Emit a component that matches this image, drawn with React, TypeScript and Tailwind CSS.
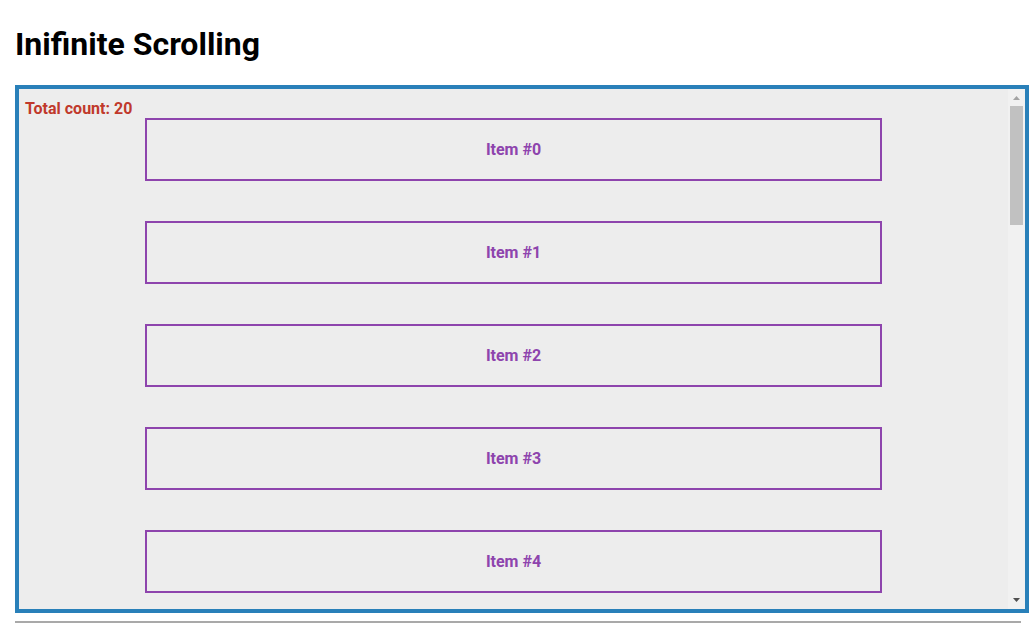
import React from 'react'

const items = Array.from({ length: 20 }, (_, i) => i)

function FakeScrollbar() {
  return (
    <div className="absolute right-0 top-0 bottom-0 w-[17px] bg-[#f1f1f1]">
      <svg className="absolute left-[5px] top-[7px]" width="7" height="4" viewBox="0 0 7 4">
        <polygon points="3.5,0 7,4 0,4" fill="#a3a3a3" />
      </svg>
      <div className="absolute left-[2px] top-[17px] w-[13px] h-[119px] bg-[#c1c1c1]" />
      <svg className="absolute left-[5px] bottom-[7px]" width="7" height="4" viewBox="0 0 7 4">
        <polygon points="0,0 7,0 3.5,4" fill="#505050" />
      </svg>
    </div>
  )
}

export default function App() {
  return (
    <div className="px-[15px] pt-[25px] font-['Roboto',sans-serif] text-black bg-white min-h-screen">
      <h1 className="text-[32px] leading-[38px] font-bold mb-[22px]">Inifinite Scrolling</h1>

      <div className="relative w-[1014px] h-[528px] border-4 border-[#2980b9] bg-[#ededed]">
        <div className="absolute left-[6px] top-[10px] z-10 text-[16px] leading-[19px] font-bold text-[#c0392b]">
          Total count: {items.length}
        </div>
        <div className="h-full overflow-y-scroll [scrollbar-width:none]">
          <div className="flex flex-col gap-[40px] pt-[29px] pb-[40px]">
            {items.map((i) => (
              <div
                key={i}
                className="ml-[126px] w-[737px] h-[63px] shrink-0 border-2 border-[#8e44ad] flex items-center justify-center text-[16px] font-bold text-[#8e44ad]"
              >
                Item #{i}
              </div>
            ))}
          </div>
        </div>
        <FakeScrollbar />
      </div>

      <div className="mt-[8px] h-[2px] bg-[#a9a9a9]" />
    </div>
  )
}
